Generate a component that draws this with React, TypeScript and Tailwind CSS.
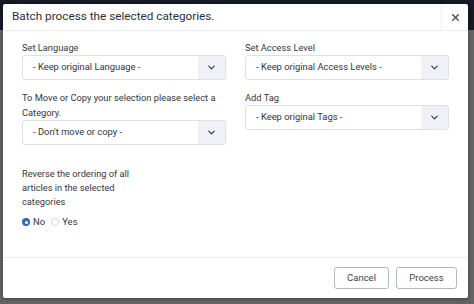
import { ChevronDown, X } from "lucide-react";

function SelectBox({ value }: { value: string }) {
  return (
    <div className="flex h-[25px] items-stretch overflow-hidden rounded-[3px] border border-[#dde1e6] bg-white">
      <div className="flex flex-1 items-center pl-[10px] text-[9.4px] text-[#30353a]">{value}</div>
      <div className="flex w-[27px] items-center justify-center bg-[#eef1f6] text-[#2a2f36]">
        <ChevronDown size={11} strokeWidth={2.2} />
      </div>
    </div>
  );
}

function Field({ label, value }: { label: string; value: string }) {
  return (
    <div className="flex flex-col">
      <label className="text-[9.3px] leading-[15px] text-[#33383d]">{label}</label>
      <SelectBox value={value} />
    </div>
  );
}

export default function App() {
  return (
    <div
      className="relative flex h-[304px] w-[474px] flex-col overflow-hidden bg-[#636363]"
      style={{ fontFamily: "Roboto, 'Liberation Sans', sans-serif" }}
    >
      <div className="h-[30px] bg-[#151a27]" />
      <div className="flex-1 bg-[#646464]" />

      <div className="absolute left-[3px] top-[4px] flex h-[294px] w-[465px] flex-col rounded-[2px] bg-white shadow-[0_1px_4px_rgba(0,0,0,0.35)]">
        <div className="flex h-[27px] items-stretch border-b border-[#ececec]">
          <h1 className="flex flex-1 items-center pl-[9px] text-[11.75px] text-[#2b3036]">
            Batch process the selected categories.
          </h1>
          <button className="flex w-[27px] items-center justify-center border-l border-[#efefef] text-[#555a60]">
            <X size={11} strokeWidth={3.4} />
          </button>
        </div>

        <div className="flex-1 px-[19px] pt-[9px]">
          <div className="grid grid-cols-2 gap-x-[19px]">
            <div className="flex flex-col gap-[10px]">
              <Field label="Set Language" value="- Keep original Language -" />
              <Field
                label="To Move or Copy your selection please select a Category."
                value="- Don't move or copy -"
              />
              <div className="mt-[12px] flex flex-col">
                <p className="w-[132px] text-[9.25px] leading-[14px] text-[#33383d]">
                  Reverse the ordering of all articles in the selected categories
                </p>
                <div className="mt-[6px] flex items-center text-[9.5px] text-[#33383d]">
                  <span className="flex h-[8px] w-[8px] items-center justify-center rounded-full bg-[#2f6cc4]">
                    <span className="h-[3px] w-[3px] rounded-full bg-white" />
                  </span>
                  <span className="ml-[3px]">No</span>
                  <span className="ml-[6px] h-[8px] w-[8px] rounded-full border border-[#d3d6da] bg-white" />
                  <span className="ml-[3px]">Yes</span>
                </div>
              </div>
            </div>
            <div className="flex flex-col gap-[10px]">
              <Field label="Set Access Level" value="- Keep original Access Levels -" />
              <Field label="Add Tag" value="- Keep original Tags -" />
            </div>
          </div>
        </div>

        <div className="flex h-[41px] items-center justify-end gap-[7px] border-t border-[#ececec] pr-[11px]">
          <button className="h-[22px] w-[55px] rounded-[3px] border border-[#b5b9be] text-[9.5px] text-[#3d4248]">
            Cancel
          </button>
          <button className="h-[22px] w-[61px] rounded-[3px] border border-[#b5b9be] text-[9.5px] text-[#3d4248]">
            Process
          </button>
        </div>
      </div>
    </div>
  );
}
